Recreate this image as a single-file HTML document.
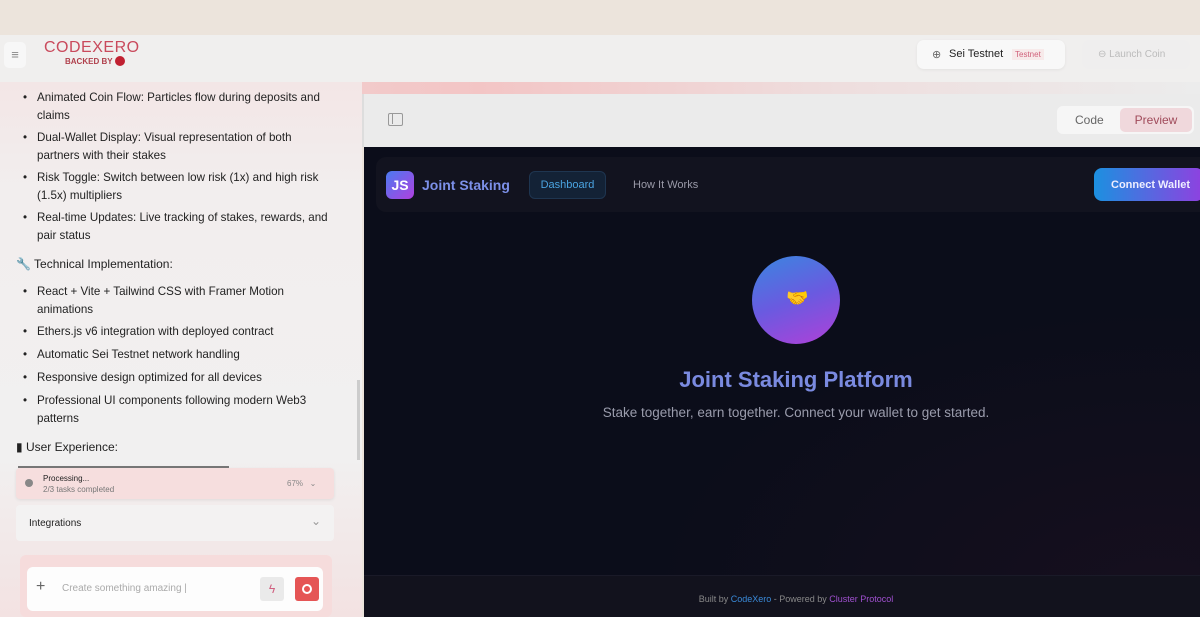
<!DOCTYPE html>
<html><head><meta charset="utf-8"><style>
*{margin:0;padding:0;box-sizing:border-box}
body{width:1200px;height:617px;overflow:hidden;font-family:"Liberation Sans",sans-serif;background:#ece4dc;position:relative}
.abs{position:absolute}
.hdr{left:0;top:35px;width:1200px;height:47px;background:#f0efee}
.left{left:0;top:82px;width:362px;height:535px;background:linear-gradient(180deg,#f3e6e6 0%,#f2eeee 20%,#f1f0f0 70%,#f3e2e2 100%)}
.li{position:absolute;left:37px;font-size:11.6px;color:#222;line-height:18px;width:296px}
.li:before{content:"•";position:absolute;left:-14px}
.sec{position:absolute;left:16px;font-size:12px;color:#222}
.dark{left:364px;top:147px;width:836px;height:470px;background:radial-gradient(ellipse at 95% 95%,#160f1e 0%,#0b0d1a 45%),#0b0d1a}
</style></head><body>
<div class="abs hdr"></div>
<div class="abs" style="left:4px;top:42px;width:22px;height:26px;background:#f7f7f7;border-radius:5px;color:#888;font-size:13px;text-align:center;line-height:26px">≡</div>
<div class="abs" style="left:44px;top:39px;font-size:16px;color:#c94a5c;letter-spacing:0.5px">CODEXERO</div>
<div class="abs" style="left:65px;top:56px;font-size:8px;color:#b0404c;font-weight:bold">BACKED BY <span style="display:inline-block;width:10px;height:10px;border-radius:50%;background:#c02030;vertical-align:-2px"></span></div>
<div class="abs" style="left:917px;top:40px;width:148px;height:29px;background:#f8f8f8;border-radius:7px;box-shadow:0 1px 3px rgba(0,0,0,.06)"></div>
<div class="abs" style="left:932px;top:48px;font-size:11px;color:#666">⊕</div>
<div class="abs" style="left:949px;top:48px;font-size:11px;color:#222">Sei Testnet</div>
<div class="abs" style="left:1012px;top:49px;font-size:8px;color:#d0607a;background:#f7eaea;padding:1px 3px">Testnet</div>
<div class="abs" style="left:1082px;top:40px;width:108px;height:29px;border-radius:7px;background:#efeeee;font-size:10px;color:#bbb;padding:9px 0 0 16px">⊖ Launch Coin</div>
<div class="abs" style="left:0;top:82px;width:1200px;height:12px;background:linear-gradient(90deg,#f0d9d9,#f3c5c5 40%,#eedede 70%,#ececec)"></div>
<div class="abs left">
<div class="li" style="top:7px">Animated Coin Flow: Particles flow during deposits and claims</div>
<div class="li" style="top:47px">Dual-Wallet Display: Visual representation of both partners with their stakes</div>
<div class="li" style="top:87px">Risk Toggle: Switch between low risk (1x) and high risk (1.5x) multipliers</div>
<div class="li" style="top:127px">Real-time Updates: Live tracking of stakes, rewards, and pair status</div>
<div class="sec" style="top:175px">🔧 Technical Implementation:</div>
<div class="li" style="top:201px">React + Vite + Tailwind CSS with Framer Motion animations</div>
<div class="li" style="top:241px">Ethers.js v6 integration with deployed contract</div>
<div class="li" style="top:264px">Automatic Sei Testnet network handling</div>
<div class="li" style="top:287px">Responsive design optimized for all devices</div>
<div class="li" style="top:310px">Professional UI components following modern Web3 patterns</div>
<div class="sec" style="top:358px">▮ User Experience:</div>
<div class="abs" style="left:18px;top:384px;width:211px;height:2px;background:#777"></div>
<div class="abs" style="left:16px;top:386px;width:318px;height:31px;background:#f6dede;border-radius:4px;box-shadow:0 1px 3px rgba(0,0,0,.08)"></div>
<div class="abs" style="left:25px;top:397px;width:8px;height:8px;border-radius:50%;background:#888"></div>
<div class="abs" style="left:43px;top:392px;font-size:8px;color:#222">Processing...</div>
<div class="abs" style="left:43px;top:403px;font-size:8px;color:#777">2/3 tasks completed</div>
<div class="abs" style="left:287px;top:397px;font-size:8px;color:#888">67% &nbsp;&nbsp;⌄</div>
<div class="abs" style="left:16px;top:423px;width:318px;height:36px;background:#f3f2f2;border-radius:4px"></div>
<div class="abs" style="left:29px;top:436px;font-size:10px;color:#222">Integrations</div>
<div class="abs" style="left:311px;top:432px;font-size:12px;color:#999">⌄</div>
<div class="abs" style="left:20px;top:473px;width:312px;height:62px;background:#f6dcdc;border-radius:6px"></div>
<div class="abs" style="left:27px;top:485px;width:296px;height:44px;background:#fdfdfd;border-radius:6px"></div>
<div class="abs" style="left:36px;top:496px;font-size:16px;color:#666">+</div>
<div class="abs" style="left:62px;top:501px;font-size:10px;color:#aaa">Create something amazing |</div>
<div class="abs" style="left:260px;top:495px;width:24px;height:24px;background:#eaeaea;border-radius:3px;color:#d06080;font-size:12px;text-align:center;line-height:24px">ϟ</div>
<div class="abs" style="left:295px;top:495px;width:24px;height:24px;background:#e55555;border-radius:3px"><div style="margin:7px;width:10px;height:10px;border:2px solid #fff;border-radius:50%"></div></div>
</div>
<div class="abs" style="left:357px;top:380px;width:3px;height:80px;background:#ccc"></div>
<div class="abs" style="left:362px;top:94px;width:838px;height:53px;background:#ebebeb;border-left:2px solid #ddd"></div>
<div class="abs" style="left:388px;top:113px;width:15px;height:13px;border:1.5px solid #999;border-radius:2px"><div style="width:4px;height:10px;border-right:1.5px solid #999"></div></div>
<div class="abs" style="left:1057px;top:106px;width:137px;height:28px;background:#f6f6f6;border-radius:6px"></div>
<div class="abs" style="left:1075px;top:113px;font-size:12px;color:#666">Code</div>
<div class="abs" style="left:1120px;top:108px;width:72px;height:24px;background:#f0d8dc;border-radius:5px;font-size:12px;color:#a04a5a;text-align:center;line-height:24px">Preview</div>
<div class="abs dark"></div>
<div class="abs" style="left:376px;top:157px;width:824px;height:55px;background:#12131f;border-radius:10px 0 0 10px"></div>
<div class="abs" style="left:386px;top:171px;width:28px;height:28px;border-radius:6px;background:linear-gradient(135deg,#4a7af0,#b040e0);color:#fff;font-weight:bold;font-size:14px;text-align:center;line-height:28px">JS</div>
<div class="abs" style="left:422px;top:177px;font-size:14px;font-weight:bold;color:#7c90e8">Joint Staking</div>
<div class="abs" style="left:529px;top:171px;width:77px;height:28px;background:#132236;border:1px solid #1e3550;border-radius:6px;font-size:11px;color:#4aa3e0;text-align:center;line-height:26px">Dashboard</div>
<div class="abs" style="left:633px;top:179px;font-size:11px;color:#9a9aa8">How It Works</div>
<div class="abs" style="left:1094px;top:168px;width:110px;height:33px;border-radius:8px;background:linear-gradient(90deg,#1c90e0,#9040e0);color:#eef;font-weight:bold;font-size:11px;padding:11px 0 0 17px">Connect Wallet</div>
<div class="abs" style="left:752px;top:256px;width:88px;height:88px;border-radius:50%;background:linear-gradient(160deg,#3a86e0,#6a5ae0 50%,#b040d8)"></div>
<div class="abs" style="left:786px;top:288px;font-size:18px">🤝</div>
<div class="abs" style="left:596px;top:367px;width:400px;text-align:center;font-size:22px;font-weight:bold;color:#7a8ae0">Joint Staking Platform</div>
<div class="abs" style="left:546px;top:405px;width:500px;text-align:center;font-size:13.5px;color:#9a9cac">Stake together, earn together. Connect your wallet to get started.</div>
<div class="abs" style="left:364px;top:575px;width:836px;height:42px;background:#12121d;border-top:1px solid #1a1a28"></div>
<div class="abs" style="left:596px;top:594px;width:400px;text-align:center;font-size:9px;color:#888">Built by <span style="color:#3a8ad8">CodeXero</span> - Powered by <span style="color:#a050d0">Cluster Protocol</span></div>
</body></html>
